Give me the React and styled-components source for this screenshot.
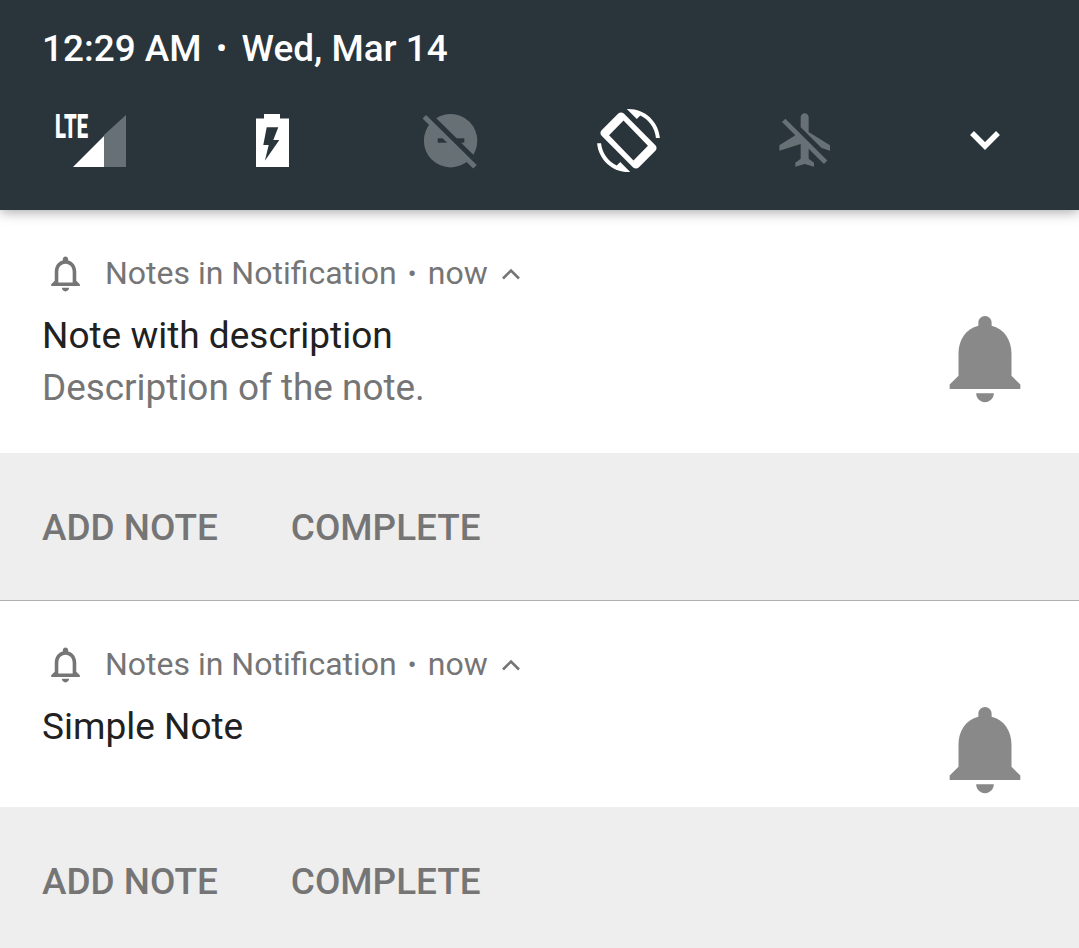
import React from 'react'
import styled, { createGlobalStyle } from 'styled-components'

const GlobalStyle = createGlobalStyle`
  html, body {
    margin: 0;
    padding: 0;
    background: #fff;
    font-family: Roboto, "Noto Sans", sans-serif;
  }
`

const dim = '#677074'

function SignalIcon() {
  return (
    <svg width="81" height="68" viewBox="0 -6 81 68">
      <text x="1" y="26" fontFamily="Roboto" fontWeight="900" fontSize="33" fill="#fff" textLength="33" lengthAdjust="spacingAndGlyphs">LTE</text>
      <path d="M19 55 L50 24 V55 Z" fill="#fff" />
      <path d="M50 23 L72 3 V55 H50 Z" fill={dim} />
    </svg>
  )
}

function BatteryIcon() {
  return (
    <svg width="33" height="53" viewBox="0 0 33 53">
      <path fillRule="evenodd" fill="#fff" d="M8 0 H24 V4.5 H33 V53 H0 V4.5 H8 Z M10.7 13.3 L7.3 31 H12.7 L8.9 46.7 L23.3 26 H17.3 L22.3 13.3 Z" />
    </svg>
  )
}

function DataSaverIcon() {
  return (
    <svg width="64" height="64" viewBox="0 0 64 64">
      <circle cx="32.6" cy="32.7" r="26.7" fill={dim} />
      <path d="M19.7 30.3 H46.3 V34.7 H19.7 Z" fill="#29343b" />
      <path d="M8.3 6.7 L59 56.7" stroke="#29343b" strokeWidth="9" />
      <path d="M6.3 8.7 L57 58.7" stroke={dim} strokeWidth="5" />
    </svg>
  )
}

function RotateIcon() {
  return (
    <svg width="63" height="63" viewBox="0 0 24 24" fill="#fff">
      <path d="M16.48 2.52c3.27 1.55 5.61 4.72 5.97 8.48h1.5C23.44 4.84 18.29 0 12 0l-.66.03 3.81 3.81 1.33-1.32z" />
      <path d="M7.52 21.48C4.25 19.94 1.91 16.76 1.55 13H.05C.56 19.16 5.71 24 12 24l.66-.03-3.81-3.81-1.33 1.32z" />
      <path fillRule="evenodd" d="M10.23 1.75c-.59-.59-1.54-.59-2.12 0L1.75 8.11c-.59.59-.59 1.54 0 2.12l12.02 12.02c.59.59 1.54.59 2.12 0l6.36-6.36c.59-.59.59-1.54 0-2.12L10.23 1.75z M13.9 19.6 L4.6 10 L10.1 4.4 L19.4 14 Z" />
    </svg>
  )
}

function AirplaneOffIcon() {
  return (
    <svg width="64" height="64" viewBox="0 0 24 24" fill={dim}>
      <path d="M13 9V3.5c0-.83-.67-1.5-1.5-1.5S10 2.67 10 3.5v3.68l7.83 7.83L21 16v-2l-8-5zM3 5.27l4.99 4.99L2 14v2l8-2.5V19l-2 1.5V22l3.5-1 3.5 1v-1.5L13 19v-3.73L18.73 21 20 19.73 4.27 4 3 5.27z" />
    </svg>
  )
}

function ChevronDown() {
  return (
    <svg width="34" height="24" viewBox="0 0 34 24">
      <path d="M5 5 L18 18 L31 5" fill="none" stroke="#fff" strokeWidth="5.5" />
    </svg>
  )
}

function ChevronUp() {
  return (
    <svg width="20" height="12" viewBox="0 0 20 12">
      <path d="M2 10.5 L10 2.5 L18 10.5" fill="none" stroke="#757575" strokeWidth="2.6" />
    </svg>
  )
}

function SmallBell() {
  return (
    <svg width="43" height="43" viewBox="0 0 24 24" fill="#757575">
      <path d="M12 22c1.1 0 2-.9 2-2h-4c0 1.1.9 2 2 2zm6-6v-5c0-3.07-1.63-5.64-4.5-6.32V4c0-.83-.67-1.5-1.5-1.5s-1.5.67-1.5 1.5v.68C7.64 5.36 6 7.92 6 11v5l-2 2v1h16v-1l-2-2zm-2 1H8v-6c0-2.48 1.51-4.5 4-4.5s4 2.02 4 4.5v6z" />
    </svg>
  )
}

function LargeBell() {
  return (
    <svg width="106" height="106" viewBox="0 0 24 24" fill="#898989">
      <path d="M12 22c1.1 0 2-.9 2-2h-4c0 1.1.89 2 2 2zm6-6v-5c0-3.07-1.64-5.64-4.5-6.32V4c0-.83-.67-1.5-1.5-1.5s-1.5.67-1.5 1.5v.68C7.63 5.36 6 7.92 6 11v5l-2 2v1h16v-1l-2-2z" />
    </svg>
  )
}

function Notification({ title, description, bodyHeight, divider }) {
  return (
    <Card $divider={divider}>
      <Body $height={bodyHeight}>
        <Texts>
          <AppRow>
            <SmallBell />
            <AppLabel>Notes in Notification</AppLabel>
            <Dot>•</Dot>
            <AppLabel>now</AppLabel>
            <ChevronUp />
          </AppRow>
          <Title>{title}</Title>
          {description && <Description>{description}</Description>}
        </Texts>
        <LargeIcon>
          <LargeBell />
        </LargeIcon>
      </Body>
      <Actions>
        <Action>ADD NOTE</Action>
        <Action>COMPLETE</Action>
      </Actions>
    </Card>
  )
}

export default function App() {
  return (
    <Page>
      <GlobalStyle />
      <Header>
        <DateRow>
          <span>12:29 AM</span>
          <HeaderDot>•</HeaderDot>
          <span>Wed, Mar 14</span>
        </DateRow>
        <Toggles>
          <Toggle><SignalIcon /></Toggle>
          <Toggle><BatteryIcon /></Toggle>
          <Toggle><DataSaverIcon /></Toggle>
          <Toggle><RotateIcon /></Toggle>
          <Toggle><AirplaneOffIcon /></Toggle>
          <Toggle><ChevronDown /></Toggle>
        </Toggles>
      </Header>
      <Notification
        title="Note with description"
        description="Description of the note."
        bodyHeight={243}
        divider
      />
      <Notification title="Simple Note" bodyHeight={206} />
    </Page>
  )
}

const Page = styled.div`
  width: 1079px;
  height: 948px;
  overflow: hidden;
  background: #fff;
`

const Header = styled.header`
  position: relative;
  z-index: 1;
  height: 210px;
  box-sizing: border-box;
  padding-top: 25px;
  background: #29343b;
  box-shadow: 0 2px 12px rgba(0, 0, 0, 0.35);
  color: #fff;
`

const DateRow = styled.div`
  display: flex;
  align-items: center;
  padding-left: 42px;
  height: 46px;
  font-size: 36.9px;
  font-weight: 500;
`

const HeaderDot = styled.span`
  width: 40px;
  text-align: center;
  font-size: 30px;
`

const Toggles = styled.div`
  display: grid;
  grid-template-columns: repeat(6, 178px);
  padding-left: 5px;
  margin-top: 35px;
  height: 64px;
`

const Toggle = styled.div`
  display: flex;
  align-items: center;
  justify-content: center;
`

const Card = styled.section`
  border-bottom: ${props => (props.$divider ? '1px solid #b0b0b0' : 'none')};
`

const Body = styled.div`
  display: flex;
  justify-content: space-between;
  height: ${props => props.$height}px;
  box-sizing: border-box;
  padding: 42px 41px 0 42px;
`

const Texts = styled.div`
  display: flex;
  flex-direction: column;
`

const AppRow = styled.div`
  display: flex;
  align-items: center;
  height: 43px;
  margin-left: 2px;
  color: #757575;

  svg:first-child {
    margin-right: 18px;
  }

  svg:last-child {
    margin-left: 13px;
  }
`

const AppLabel = styled.span`
  font-size: 32px;
  line-height: 43px;
`

const Dot = styled.span`
  width: 31px;
  text-align: center;
  font-size: 26px;
`

const Title = styled.div`
  margin-top: 15px;
  font-size: 37px;
  line-height: 52px;
  color: #212121;
`

const Description = styled.div`
  font-size: 36.9px;
  line-height: 52px;
  color: #757575;
`

const LargeIcon = styled.div`
  margin-top: 53px;
  height: 106px;
`

const Actions = styled.div`
  display: flex;
  align-items: center;
  gap: 73px;
  height: 147px;
  box-sizing: border-box;
  padding-left: 42px;
  padding-top: 2px;
  background: #eee;
`

const Action = styled.div`
  font-size: 36.9px;
  font-weight: 500;
  color: #757575;
`
